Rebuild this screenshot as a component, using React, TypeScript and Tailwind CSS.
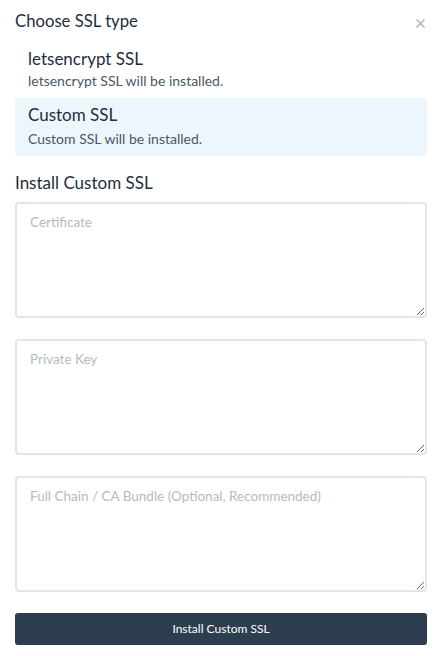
import React from "react";

export default function App() {
  const ta =
    "block w-full h-[116px] rounded-[4px] border-2 border-[#dfe6ee] bg-white px-[13px] pt-[8px] pb-[6px] text-[13.5px] leading-[20px] text-[#2d3e50] placeholder:text-[#b3bbc3] outline-none resize-y";
  return (
    <div className="w-[442px] h-[656px] bg-white px-[15px] pt-[9px] font-['Lato','Open_Sans',sans-serif] text-[#1f2d3d]">
      <div className="flex items-start justify-between h-[24px]">
        <h2 className="text-[16.7px] leading-[24px]">Choose SSL type</h2>
        <svg className="mt-[10px] mr-[2px]" width="9" height="9" viewBox="0 0 9 9">
          <path d="M0.5 0.5L8.5 8.5M8.5 0.5L0.5 8.5" stroke="#aab3bc" strokeWidth="1.4" />
        </svg>
      </div>
      <div className="mt-[16px] px-[13px]">
        <div className="text-[17px] leading-[20px]">letsencrypt SSL</div>
        <div className="mt-[3px] text-[14px] leading-[18px] text-[#4b5763]">letsencrypt SSL will be installed.</div>
      </div>
      <div className="mt-[8px] h-[58px] rounded-[3px] bg-[#eef6fd] px-[13px] pt-[7px]">
        <div className="text-[17px] leading-[20px]">Custom SSL</div>
        <div className="mt-[5px] text-[14px] leading-[18px] text-[#4b5763]">Custom SSL will be installed.</div>
      </div>
      <h3 className="mt-[17px] text-[17px] leading-[20px]">Install Custom SSL</h3>
      <div className="mt-[9px] flex flex-col gap-[21px]">
        <textarea className={ta} placeholder="Certificate" />
        <textarea className={ta} placeholder="Private Key" />
        <textarea className={ta} placeholder="Full Chain / CA Bundle (Optional, Recommended)" />
      </div>
      <button className="mt-[21px] h-[32px] w-full rounded-[3px] bg-[#2d3e50] text-white text-[12px] leading-[32px]">
        Install Custom SSL
      </button>
    </div>
  );
}
